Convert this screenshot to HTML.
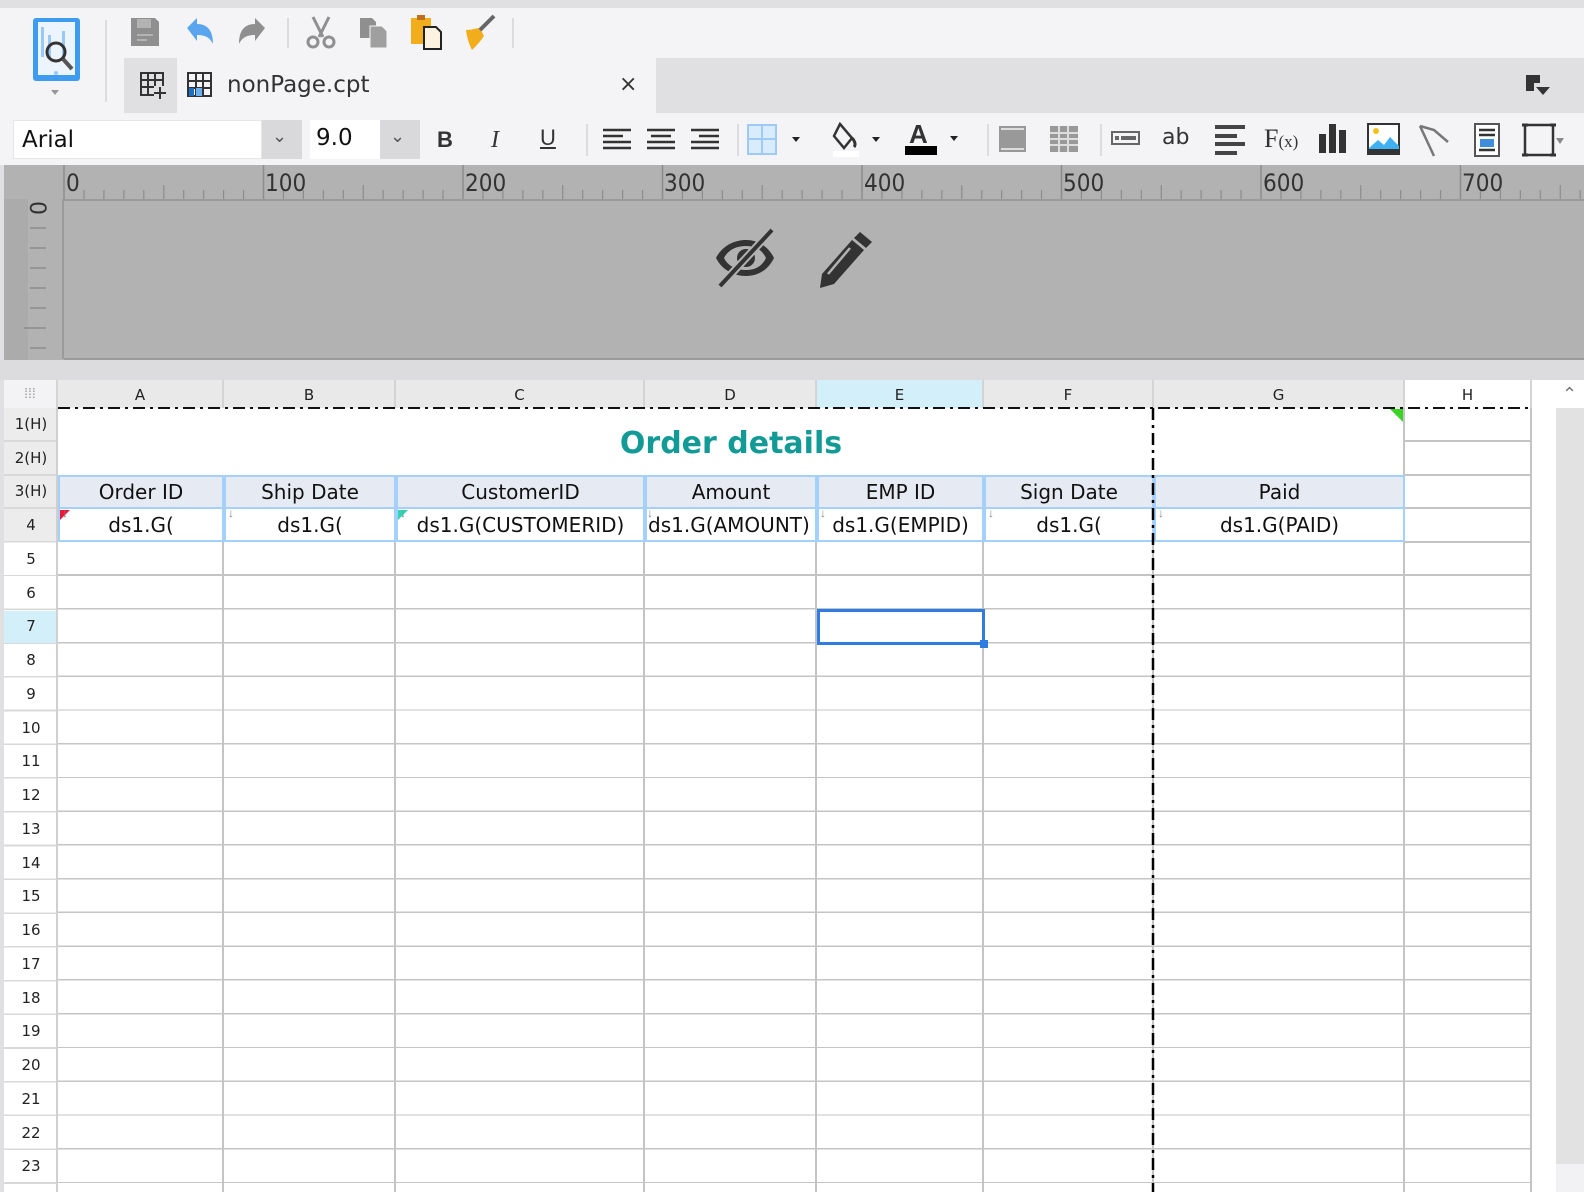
<!DOCTYPE html>
<html><head><meta charset="utf-8"><style>
*{margin:0;padding:0;box-sizing:border-box}
body{width:1584px;height:1192px;position:relative;overflow:hidden;background:#fff;font-family:"Liberation Sans","DejaVu Sans",sans-serif}
.a{position:absolute}
.rl{position:absolute;left:4px;width:54px;text-align:center;font-family:"DejaVu Sans",sans-serif;font-size:15px;color:#222;margin-top:3px}
.ch{position:absolute;top:380px;height:28px;line-height:30px;text-align:center;font-family:"DejaVu Sans",sans-serif;font-size:15px;color:#222;border-right:2px solid #d4d4d4}
.hc{position:absolute;top:475px;height:34px;background:#e6eaf2;border:2px solid #a3d1fb;text-align:center;line-height:31px;font-family:"DejaVu Sans",sans-serif;font-size:20px;color:#111}
.dc{position:absolute;top:507px;height:35px;background:#fff;border:2px solid #a3d1fb;text-align:center;line-height:32px;font-family:"DejaVu Sans",sans-serif;font-size:20px;color:#111;white-space:nowrap;overflow:hidden}
.vl{position:absolute;width:2px;background:#c4c4c4}
.ic{position:absolute}
</style></head><body>
<div class="a" style="left:0;top:0;width:1584px;height:8px;background:#e0e0e2"></div>
<div class="a" style="left:0;top:8px;width:1584px;height:50px;background:#f4f4f6"></div>
<div class="a" style="left:0;top:58px;width:124px;height:55px;background:#f4f4f6"></div>
<div class="a" style="left:124px;top:58px;width:1460px;height:55px;background:#e0e0e2"></div>
<div class="a" style="left:177px;top:58px;width:479px;height:55px;background:#f4f4f6"></div>
<div class="a" style="left:0;top:113px;width:1584px;height:52px;background:#f4f4f6"></div>
<div class="a" style="left:105px;top:20px;width:2px;height:82px;background:#dcdcdc"></div>
<svg class="ic" style="left:32px;top:17px" width="50" height="66" viewBox="0 0 50 66">
<rect x="1" y="1" width="47" height="63" rx="3" fill="#3d9bf0"/>
<rect x="6" y="5" width="37" height="53" fill="#fff" opacity=".9"/>
<rect x="9" y="10" width="3" height="30" fill="#9cc9f3"/><rect x="16" y="18" width="3" height="24" fill="#9cc9f3"/><rect x="30" y="14" width="3" height="28" fill="#9cc9f3"/>
<circle cx="24" cy="35" r="9" fill="none" stroke="#333" stroke-width="3"/><line x1="31" y1="42" x2="40" y2="52" stroke="#555" stroke-width="4"/>
<circle cx="24" cy="56" r="2" fill="#9cc9f3"/></svg>
<div class="a" style="left:51px;top:90px;width:0;height:0;border-left:4px solid transparent;border-right:4px solid transparent;border-top:5px solid #999"></div>
<svg class="ic" style="left:129px;top:16px" width="32" height="32"><path d="M2 2h24l4 4v24H2z" fill="#8f8f8f"/><rect x="8" y="3" width="14" height="9" fill="#b3b3b3"/><rect x="8" y="18" width="16" height="2" fill="#b3b3b3"/><rect x="8" y="23" width="10" height="2" fill="#b3b3b3"/></svg>
<svg class="ic" style="left:183px;top:16px" width="34" height="32"><path d="M4 12l10-10v6c10 0 16 6 16 20c-3-6-7-9-16-9v6z" fill="#5aa6ee"/></svg>
<svg class="ic" style="left:235px;top:16px" width="34" height="32"><path d="M30 12l-10-10v6c-10 0-16 6-16 20c3-6 7-9 16-9v6z" fill="#8f8f8f"/></svg>
<div class="a" style="left:287px;top:18px;width:2px;height:30px;background:#dcdcdc"></div>
<svg class="ic" style="left:304px;top:15px" width="34" height="34"><path d="M9 2l10 20M25 2L15 22" stroke="#8f8f8f" stroke-width="3"/><circle cx="9" cy="27" r="5" fill="none" stroke="#8f8f8f" stroke-width="3"/><circle cx="25" cy="27" r="5" fill="none" stroke="#8f8f8f" stroke-width="3"/></svg>
<svg class="ic" style="left:358px;top:16px" width="34" height="32"><path d="M2 2h12l4 4v16H2z" fill="#8f8f8f"/><path d="M12 10h12l5 5v17H12z" fill="#9f9f9f" stroke="#f4f4f6" stroke-width="1"/></svg>
<svg class="ic" style="left:410px;top:14px" width="34" height="36"><rect x="1" y="4" width="20" height="26" fill="#f2ad1c"/><rect x="7" y="1" width="8" height="5" fill="#c0701a"/><path d="M14 13h12l5 5v17H14z" fill="#fbf3df" stroke="#222" stroke-width="2"/></svg>
<svg class="ic" style="left:464px;top:14px" width="34" height="36"><path d="M2 16c6 0 10 -2 14-2l4 8c-4 6-8 10-12 14c-3-6-5-12-6-20z" fill="#f2ad1c"/><path d="M16 16l14-14" stroke="#666" stroke-width="4"/></svg>
<div class="a" style="left:512px;top:18px;width:2px;height:30px;background:#dcdcdc"></div>
<svg class="ic" style="left:139px;top:70px" width="30" height="32"><g stroke="#333" stroke-width="2" fill="none"><rect x="2" y="3" width="22" height="22"/><path d="M2 10h22M2 17h22M9 3v22M16 3v22"/></g><rect x="15" y="16" width="12" height="12" fill="#e0e0e2"/><path d="M21 17v12M15 23h12" stroke="#333" stroke-width="2"/></svg>
<svg class="ic" style="left:187px;top:71px" width="26" height="28"><g stroke="#333" stroke-width="2" fill="none"><rect x="1" y="2" width="23" height="23"/><path d="M1 10h23M1 17h23M9 2v23M16 2v23"/></g><rect x="2" y="17" width="5" height="8" fill="#1a6fc4"/><rect x="9" y="17" width="6" height="8" fill="#6ab0ef"/></svg>
<div class="a" style="left:227px;top:72px;font-family:'DejaVu Sans',sans-serif;font-size:23px;color:#333">nonPage.cpt</div>
<div class="a" style="left:619px;top:72px;font-family:'DejaVu Sans',sans-serif;font-size:22px;color:#333">×</div>
<svg class="ic" style="left:1526px;top:75px" width="26" height="22"><rect x="0" y="0" width="8" height="16" fill="#333"/><rect x="0" y="0" width="14" height="8" fill="#333"/><path d="M10 12h14l-7 8z" fill="#333"/></svg>
<div class="a" style="left:13px;top:120px;width:249px;height:39px;background:#fff;border:1px solid #e6e6e6"></div>
<div class="a" style="left:262px;top:120px;width:40px;height:39px;background:#d9d9db"></div>
<div class="a" style="left:22px;top:127px;font-family:'DejaVu Sans',sans-serif;font-size:23px;color:#111">Arial</div>
<div class="a" style="left:272px;top:126px;font-size:18px;color:#555">&#8964;</div>
<div class="a" style="left:310px;top:120px;width:70px;height:39px;background:#fff"></div>
<div class="a" style="left:380px;top:120px;width:40px;height:39px;background:#d9d9db"></div>
<div class="a" style="left:316px;top:125px;font-family:'DejaVu Sans',sans-serif;font-size:23px;color:#111">9.0</div>
<div class="a" style="left:390px;top:126px;font-size:18px;color:#555">&#8964;</div>
<div class="a" style="left:437px;top:127px;font-weight:bold;font-size:22px;color:#333">B</div>
<div class="a" style="left:491px;top:127px;font-style:italic;font-family:'Liberation Serif',serif;font-size:24px;color:#333">I</div>
<div class="a" style="left:540px;top:125px;text-decoration:underline;font-size:22px;color:#333">U</div>
<div class="a" style="left:586px;top:124px;width:2px;height:32px;background:#dcdcdc"></div>
<svg class="ic" style="left:603px;top:128px" width="120" height="24"><g stroke="#333" stroke-width="2.5"><path d="M0 2h28M0 8h20M0 14h28M0 20h28"/><path d="M44 2h28M48 8h20M44 14h28M44 20h28"/><path d="M88 2h28M96 8h20M88 14h28M88 20h28"/></g></svg>
<div class="a" style="left:737px;top:124px;width:2px;height:32px;background:#dcdcdc"></div>
<svg class="ic" style="left:747px;top:124px" width="64" height="32"><rect x="1" y="1" width="28" height="29" fill="#d9ecfc" stroke="#9ecbf5" stroke-width="2"/><path d="M15 1v29M1 15h28" stroke="#9ecbf5" stroke-width="2"/><path d="M45 13h8l-4 5z" fill="#222"/></svg>
<svg class="ic" style="left:830px;top:122px" width="56" height="36"><path d="M10 2l12 14l-8 10l-10-12z" fill="none" stroke="#333" stroke-width="2.5"/><path d="M22 16c3 3 4 7 2 9" stroke="#333" stroke-width="3" fill="none"/><rect x="3" y="29" width="26" height="6" fill="#fff"/><path d="M42 15h8l-4 5z" fill="#222"/></svg>
<svg class="ic" style="left:903px;top:120px" width="60" height="36"><text x="6" y="23" font-family="Liberation Sans" font-weight="bold" font-size="26" fill="#333">A</text><rect x="2" y="26" width="32" height="9" fill="#000"/><path d="M47 16h8l-4 5z" fill="#222"/></svg>
<div class="a" style="left:987px;top:124px;width:2px;height:32px;background:#dcdcdc"></div>
<svg class="ic" style="left:997px;top:124px" width="32" height="32"><rect x="2" y="2" width="27" height="26" fill="#999"/><path d="M4 5h23M4 25h23" stroke="#ddd" stroke-width="2"/></svg>
<svg class="ic" style="left:1049px;top:124px" width="32" height="32"><rect x="1" y="2" width="28" height="26" fill="#999"/><path d="M1 9h28M1 15h28M1 21h28M10 2v26M19 2v26" stroke="#ddd" stroke-width="2"/></svg>
<div class="a" style="left:1100px;top:124px;width:2px;height:32px;background:#dcdcdc"></div>
<svg class="ic" style="left:1110px;top:128px" width="32" height="24"><rect x="2" y="4" width="27" height="12" fill="none" stroke="#666" stroke-width="2"/><rect x="5" y="8" width="4" height="4" fill="#666"/><rect x="11" y="8" width="15" height="4" fill="#666"/></svg>
<div class="a" style="left:1162px;top:125px;font-family:'DejaVu Sans',sans-serif;font-size:22px;color:#333">ab</div>
<svg class="ic" style="left:1213px;top:124px" width="34" height="32"><path d="M2 3h30M2 12h22M2 20h30M2 29h22" stroke="#444" stroke-width="4"/></svg>
<div class="a" style="left:1264px;top:124px;font-family:'Liberation Serif',serif;font-size:26px;color:#333">F<span style="font-size:17px">(x)</span></div>
<svg class="ic" style="left:1317px;top:122px" width="32" height="34"><rect x="2" y="12" width="7" height="19" fill="#333"/><rect x="12" y="2" width="7" height="29" fill="#333"/><rect x="22" y="8" width="7" height="23" fill="#333"/></svg>
<svg class="ic" style="left:1367px;top:122px" width="34" height="34"><rect x="1" y="2" width="31" height="30" fill="#fff" stroke="#333" stroke-width="2"/><path d="M2 26l9-8l6 5l6-8l9 9v6H2z" fill="#3fb1f2"/><circle cx="9" cy="9" r="3" fill="#f2c21c"/><rect x="1" y="27" width="31" height="5" fill="#333"/></svg>
<svg class="ic" style="left:1418px;top:122px" width="34" height="36"><path d="M2 4l14 4l14 12M2 4l14 30" stroke="#777" stroke-width="2.5" fill="none"/></svg>
<svg class="ic" style="left:1473px;top:122px" width="30" height="36"><rect x="2" y="2" width="24" height="32" fill="#fff" stroke="#555" stroke-width="2"/><path d="M6 8h16M6 13h16M6 28h16" stroke="#333" stroke-width="2.5"/><rect x="7" y="17" width="14" height="8" fill="#3d8fdc"/></svg>
<svg class="ic" style="left:1521px;top:122px" width="63" height="36"><rect x="4" y="3" width="28" height="30" fill="#f4f4f6" stroke="#333" stroke-width="2.5"/><path d="M1 3h6M29 3h6M1 33h6M29 33h6" stroke="#333" stroke-width="3"/><path d="M35 16h8l-4 6z" fill="#888"/></svg>
<div class="a" style="left:0;top:165px;width:1584px;height:195px;background:#b2b2b2"></div>
<div class="a" style="left:0;top:165px;width:4px;height:195px;background:#e0e0e2"></div>
<div class="a" style="left:4px;top:199px;width:24px;height:161px;background:#ababab"></div>
<div class="a" style="left:64px;top:199px;width:1520px;height:2px;background:#9a9a9a"></div>
<div class="a" style="left:62px;top:199px;width:2px;height:160px;background:#9a9a9a"></div>
<div class="a" style="left:64px;top:358px;width:1520px;height:2px;background:#9a9a9a"></div>
<svg class="a" style="left:0;top:165px" width="1584" height="195">
<g stroke="#8c8c8c" stroke-width="1.5">
<line x1="64" y1="0" x2="64" y2="34"/><line x1="263.5" y1="0" x2="263.5" y2="34"/><line x1="463" y1="0" x2="463" y2="34"/><line x1="662.5" y1="0" x2="662.5" y2="34"/><line x1="862" y1="0" x2="862" y2="34"/><line x1="1061.5" y1="0" x2="1061.5" y2="34"/><line x1="1261" y1="0" x2="1261" y2="34"/><line x1="1460.5" y1="0" x2="1460.5" y2="34"/>
</g>
<g id="tk" stroke="#8c8c8c" stroke-width="1.2"></g>
<g font-family="DejaVu Sans Condensed,DejaVu Sans,sans-serif" font-size="24" fill="#333">
<text x="66" y="26">0</text><text x="265" y="26">100</text><text x="465" y="26">200</text><text x="664" y="26">300</text><text x="864" y="26">400</text><text x="1063" y="26">500</text><text x="1263" y="26">600</text><text x="1462" y="26">700</text>
</g>
<g stroke="#8c8c8c" stroke-width="1.5"><line x1="30" y1="83" x2="46" y2="83"/><line x1="30" y1="143" x2="46" y2="143"/><line x1="24" y1="163" x2="46" y2="163"/><line x1="30" y1="103" x2="46" y2="103"/><line x1="30" y1="123" x2="46" y2="123"/><line x1="30" y1="183" x2="46" y2="183"/><line x1="30" y1="63" x2="46" y2="63"/></g>
<text x="0" y="0" transform="translate(30,36) rotate(90)" font-family="DejaVu Sans" font-size="22" fill="#333">0</text>
</svg>
<svg class="ic" style="left:712px;top:228px" width="66" height="62" viewBox="0 0 66 62"><path d="M4 30c6-12 18-18 30-18c12 0 22 6 28 18c-6 12-16 18-28 18c-12 0-24-6-30-18z" fill="#333"/><path d="M12 30c4-8 12-12 22-12c10 0 16 4 20 12c-4 8-10 12-20 12c-10 0-18-4-22-12z" fill="#b2b2b2"/><circle cx="34" cy="30" r="9" fill="#333"/><path d="M8 58L60 2" stroke="#b2b2b2" stroke-width="8"/><path d="M8 58L60 2" stroke="#333" stroke-width="4"/></svg>
<svg class="ic" style="left:814px;top:228px" width="64" height="62" viewBox="0 0 64 62"><path d="M46 4l12 10l-6 6l-12-10z" fill="#333"/><path d="M38 12l12 10l-30 34l-14 4l2-14z" fill="#333"/><path d="M14 46l22-26" stroke="#b2b2b2" stroke-width="2.5"/></svg>
<div class="a" style="left:0;top:360px;width:1584px;height:20px;background:#dcdcde"></div>
<div class="a" style="left:0;top:380px;width:4px;height:812px;background:#e0e0e2"></div>
<div class="a" style="left:4px;top:380px;width:54px;height:28px;background:#f3f3f5;border-right:2px solid #d4d4d4;text-align:center;color:#999;font-size:14px;line-height:26px">⁞⁞⁞</div>
<div class="a" style="left:58px;top:380px;width:1473px;height:28px;background:#e9e9e9"></div>
<div class="ch" style="left:58px;width:166px">A</div>
<div class="ch" style="left:224px;width:172px">B</div>
<div class="ch" style="left:396px;width:249px">C</div>
<div class="ch" style="left:645px;width:172px">D</div>
<div class="ch" style="left:817px;width:167px;background:#d3effa">E</div>
<div class="ch" style="left:984px;width:170px">F</div>
<div class="ch" style="left:1154px;width:251px">G</div>
<div class="ch" style="left:1405px;width:127px;background:#fff">H</div>
<div class="a" style="left:1532px;top:380px;width:52px;height:28px;background:#fff"></div>
<div class="a" style="left:1562px;top:384px;font-size:18px;color:#777">&#8963;</div>
<div class="a" style="left:1556px;top:408px;width:28px;height:756px;background:#e2e2e2"></div>
<div class="a" style="left:1556px;top:1164px;width:28px;height:28px;background:#f2f2f4"></div>
<div class="a" style="left:4px;top:408px;width:54px;height:134px;background:#ececec"></div>
<div class="a" style="left:4px;top:440px;width:54px;height:2px;background:#d8d8d8"></div>
<div class="a" style="left:4px;top:474px;width:54px;height:2px;background:#d8d8d8"></div>
<div class="a" style="left:4px;top:507px;width:54px;height:2px;background:#d8d8d8"></div>
<div class="a" style="left:4px;top:541px;width:54px;height:651px;background:repeating-linear-gradient(to bottom,#d8d8d8 0 1.5px,#fff 1.5px 33.75px)"></div>
<div class="a" style="left:4px;top:611px;width:54px;height:32px;background:#d3effa"></div>
<div class="a" style="left:56px;top:408px;width:2px;height:784px;background:#d0d0d0"></div>
<div class="rl" style="top:412px">1(H)</div>
<div class="rl" style="top:446px">2(H)</div>
<div class="rl" style="top:479px">3(H)</div>
<div class="rl" style="top:513px">4</div>
<div class="rl" style="top:547px">5</div><div class="rl" style="top:581px">6</div><div class="rl" style="top:614px">7</div><div class="rl" style="top:648px">8</div><div class="rl" style="top:682px">9</div><div class="rl" style="top:716px">10</div><div class="rl" style="top:749px">11</div><div class="rl" style="top:783px">12</div><div class="rl" style="top:817px">13</div><div class="rl" style="top:851px">14</div><div class="rl" style="top:884px">15</div><div class="rl" style="top:918px">16</div><div class="rl" style="top:952px">17</div><div class="rl" style="top:986px">18</div><div class="rl" style="top:1019px">19</div><div class="rl" style="top:1053px">20</div><div class="rl" style="top:1087px">21</div><div class="rl" style="top:1121px">22</div><div class="rl" style="top:1154px">23</div>
<div class="a" style="left:58px;top:542px;width:1474px;height:650px;background:repeating-linear-gradient(to bottom,transparent 0 32.25px,#c4c4c4 32.25px 33.75px)"></div>
<div class="a" style="left:1405px;top:440px;width:127px;height:2px;background:#c4c4c4"></div>
<div class="a" style="left:1405px;top:474px;width:127px;height:2px;background:#c4c4c4"></div>
<div class="a" style="left:1405px;top:507px;width:127px;height:2px;background:#c4c4c4"></div>
<div class="a" style="left:1405px;top:541px;width:127px;height:2px;background:#c4c4c4"></div>
<div class="vl" style="left:222px;top:542px;height:650px"></div>
<div class="vl" style="left:394px;top:542px;height:650px"></div>
<div class="vl" style="left:643px;top:542px;height:650px"></div>
<div class="vl" style="left:815px;top:542px;height:650px"></div>
<div class="vl" style="left:982px;top:542px;height:650px"></div>
<div class="vl" style="left:1152px;top:542px;height:650px"></div>
<div class="vl" style="left:1403px;top:408px;height:784px"></div>
<div class="vl" style="left:1530px;top:408px;height:784px"></div>
<div class="a" style="left:58px;top:426px;width:1346px;text-align:center;font-family:'DejaVu Sans',sans-serif;font-weight:bold;font-size:30px;color:#129a96">Order details</div>
<div class="a" style="left:1390px;top:409px;width:0;height:0;border-top:13px solid #3cd424;border-left:13px solid transparent"></div>
<div class="hc" style="left:58px;width:166px">Order ID</div>
<div class="hc" style="left:224px;width:172px">Ship Date</div>
<div class="hc" style="left:396px;width:249px">CustomerID</div>
<div class="hc" style="left:645px;width:172px">Amount</div>
<div class="hc" style="left:817px;width:167px">EMP ID</div>
<div class="hc" style="left:984px;width:170px">Sign Date</div>
<div class="hc" style="left:1154px;width:251px">Paid</div>
<div class="dc" style="left:58px;width:166px">ds1.G(</div>
<div class="dc" style="left:224px;width:172px">ds1.G(</div>
<div class="dc" style="left:396px;width:249px">ds1.G(CUSTOMERID)</div>
<div class="dc" style="left:645px;width:172px;text-align:left;padding-left:1px">ds1.G(AMOUNT)</div>
<div class="dc" style="left:817px;width:167px">ds1.G(EMPID)</div>
<div class="dc" style="left:984px;width:170px">ds1.G(</div>
<div class="dc" style="left:1154px;width:251px">ds1.G(PAID)</div>
<div class="a" style="left:60px;top:510px;width:0;height:0;border-top:10px solid #e8183a;border-right:10px solid transparent"></div>
<div class="a" style="left:398px;top:510px;width:0;height:0;border-top:10px solid #2fd6b5;border-right:10px solid transparent"></div>
<div class="a" style="left:228px;top:506px;font-size:12px;color:#888">↓</div>
<div class="a" style="left:62px;top:506px;font-size:12px;color:#888">↓</div>
<div class="a" style="left:400px;top:506px;font-size:12px;color:#888">↓</div>
<div class="a" style="left:647px;top:506px;font-size:12px;color:#888">↓</div>
<div class="a" style="left:820px;top:506px;font-size:12px;color:#888">↓</div>
<div class="a" style="left:988px;top:506px;font-size:12px;color:#888">↓</div>
<div class="a" style="left:1158px;top:506px;font-size:12px;color:#888">↓</div>
<svg class="a" style="left:0;top:0" width="1584" height="1192">
<line x1="58" y1="408" x2="1532" y2="408" stroke="#111" stroke-width="2" stroke-dasharray="12 5 3 5"/>
<line x1="1153" y1="408" x2="1153" y2="1192" stroke="#000" stroke-width="2.5" stroke-dasharray="12 5 3 5"/>
</svg>
<div class="a" style="left:817px;top:609px;width:168px;height:36px;border:3.5px solid #2f7de1"></div>
<div class="a" style="left:980px;top:640px;width:8px;height:8px;background:#2f7de1"></div>
<script>
var g=document.getElementById('tk'),s='';
for(var i=0;i<80;i++){var x=64+i*19.95;if(i%10==0)continue;var h=(i%5==0)?14:9;s+='<line x1="'+x+'" y1="'+(34-h)+'" x2="'+x+'" y2="34"/>';}
g.innerHTML=s;
</script>
</body></html>
